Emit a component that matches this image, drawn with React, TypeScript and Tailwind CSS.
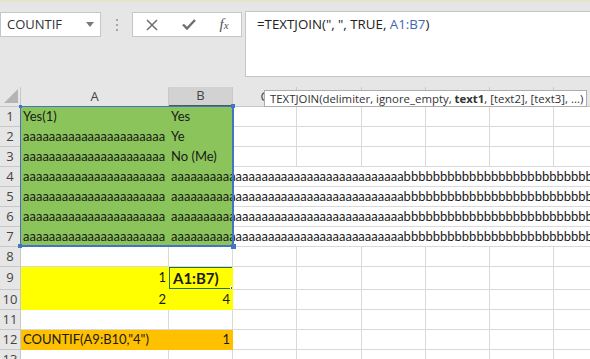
import React from "react";

type Cell = {
    text?: string;
    fill?: "green" | "yellow" | "orange";
    right?: boolean;
    bold?: boolean;
    overflow?: boolean;
    active?: boolean;
};

type Row = { n: number; h: string; cells: Cell[] };

const colW = [
    "w-[148px]",
    "w-[64px]",
    "w-[64px]",
    "w-[65px]",
    "w-[64px]",
    "w-[64px]",
    "w-[64px]",
    "w-[64px]",
];

const fillCls = {
    green: "bg-[#8bc45a] border-[#8bc45a]",
    yellow: "bg-[#ffff00] border-[#ffff00]",
    orange: "bg-[#ffc000] border-[#ffc000]",
};

const a22 = "a".repeat(22);
const longB = "a".repeat(36) + "b".repeat(30);

const rows: Row[] = [
    { n: 1, h: "h-[20px]", cells: [{ text: "Yes(1)", fill: "green" }, { text: "Yes", fill: "green" }] },
    { n: 2, h: "h-[20px]", cells: [{ text: a22, fill: "green" }, { text: "Ye", fill: "green" }] },
    { n: 3, h: "h-[20px]", cells: [{ text: a22, fill: "green" }, { text: "No (Me)", fill: "green" }] },
    { n: 4, h: "h-[20px]", cells: [{ text: a22, fill: "green" }, { text: longB, fill: "green", overflow: true }] },
    { n: 5, h: "h-[20px]", cells: [{ text: a22, fill: "green" }, { text: longB, fill: "green", overflow: true }] },
    { n: 6, h: "h-[20px]", cells: [{ text: a22, fill: "green" }, { text: longB, fill: "green", overflow: true }] },
    { n: 7, h: "h-[20px]", cells: [{ text: a22, fill: "green" }, { text: longB, fill: "green", overflow: true }] },
    { n: 8, h: "h-[20px]", cells: [] },
    { n: 9, h: "h-[23px]", cells: [{ text: "1", fill: "yellow", right: true }, { text: "A1:B7)", fill: "yellow", bold: true, active: true }] },
    { n: 10, h: "h-[20px]", cells: [{ text: "2", fill: "yellow", right: true }, { text: "4", fill: "yellow", right: true }] },
    { n: 11, h: "h-[20px]", cells: [] },
    { n: 12, h: "h-[20px]", cells: [{ text: 'COUNTIF(A9:B10,"4")', fill: "orange" }, { text: "1", fill: "orange", right: true }] },
    { n: 13, h: "h-[20px]", cells: [] },
];

const SheetRow = ({ row }: { row: Row }) => {
    const hasOverflow = row.cells.some((c) => c.overflow);
    return (
        <div className={`flex ${row.h}`}>
            <div className="w-[21px] shrink-0 border-r border-b border-[#c8c8c8] bg-[#e6e6e6] flex items-center justify-center text-[13px] text-[#444] font-['Open_Sans']">
                {row.n}
            </div>
            {colW.map((w, i) => {
                if (hasOverflow && i >= 2) return null;
                const c = row.cells[i] || {};
                return (
                    <div
                        key={i}
                        className={`${w} shrink-0 relative flex items-center border-r border-b px-[2px] whitespace-nowrap ${
                            c.fill ? fillCls[c.fill] : "border-[#d9d9d9]"
                        } ${c.right ? "justify-end" : ""} ${c.overflow ? "overflow-visible z-10" : "overflow-hidden"} ${
                            c.bold ? "font-bold text-[15px] pl-[4px]" : "text-[13px]"
                        }`}
                    >
                        {c.text}
                        {c.active && (
                            <div className="absolute -left-[1px] -top-[1px] w-[66px] h-[24px] border-2 border-[#217346]">
                                <div className="absolute -right-[3px] -bottom-[3px] w-[5px] h-[5px] bg-[#217346] border border-white" />
                            </div>
                        )}
                    </div>
                );
            })}
            {hasOverflow && <div className="flex-1 border-b border-[#d9d9d9]" />}
        </div>
    );
};

export default function App() {
    return (
        <div className="w-[590px] h-[359px] overflow-hidden bg-[#e6e6e6] relative font-['Lato'] text-[#1a1a1a]">
            <div className="h-[2px] bg-[#e6e4c9]" />

            {/* formula bar */}
            <div className="flex items-start h-[85px] pt-[9px]">
                <div className="mt-[1px] w-[101px] h-[25px] bg-white border border-[#c6c6c6] flex items-center pl-[6px] pr-[6px] font-['Open_Sans'] text-[13px] text-[#333]">
                    <span className="flex-1">COUNTIF</span>
                    <svg width="8" height="5" viewBox="0 0 8 5">
                        <path d="M0 0 L8 0 L4 5 Z" fill="#7a7a7a" />
                    </svg>
                </div>
                <div className="w-[31px] h-[25px] mt-[1px] flex flex-col items-center justify-center gap-[3px]">
                    <div className="w-[2px] h-[2px] bg-[#a6a6a6]" />
                    <div className="w-[2px] h-[2px] bg-[#a6a6a6]" />
                    <div className="w-[2px] h-[2px] bg-[#a6a6a6]" />
                </div>
                <div className="mt-[1px] w-[110px] h-[25px] bg-white border border-[#c6c6c6] flex items-center">
                    <div className="w-[37px] flex justify-center">
                        <svg width="12" height="12" viewBox="0 0 12 12">
                            <path d="M1 1 L11 11 M11 1 L1 11" stroke="#6e6e6e" strokeWidth="1.5" />
                        </svg>
                    </div>
                    <div className="w-[37px] flex justify-center">
                        <svg width="14" height="11" viewBox="0 0 14 11">
                            <path d="M1 5.5 L5 9.5 L13 1" stroke="#6e6e6e" strokeWidth="2.4" fill="none" />
                        </svg>
                    </div>
                    <div className="w-[34px] flex justify-center font-['Liberation_Serif'] italic text-[#555] text-[15px] leading-none">
                        f<span className="text-[11px] mt-[3px]">x</span>
                    </div>
                </div>
                <div className="ml-[3px] flex-1 h-[66px] bg-white border border-[#c6c6c6] border-r-0 pl-[11px] pt-[3px] font-['Open_Sans'] text-[13.3px] text-[#222]">
                    =TEXTJOIN(", ", TRUE, <span className="text-[#3f68b3]">A1:B7</span>)
                </div>
            </div>

            {/* column headers */}
            <div className="flex h-[20px] font-['Open_Sans'] text-[13px] text-[#444]">
                <div className="w-[21px] shrink-0 border-r border-b border-[#c8c8c8] bg-[#e6e6e6] flex items-end justify-end pr-[2px] pb-[3px]">
                    <svg width="14" height="14" viewBox="0 0 14 14">
                        <path d="M14 0 L14 14 L0 14 Z" fill="#b4b4b4" />
                    </svg>
                </div>
                {["A", "B", "C", "", "", "", "", ""].map((l, i) => (
                    <div
                        key={i}
                        className={`${colW[i]} shrink-0 flex items-center justify-center border-r ${
                            l === "B"
                                ? "bg-[#d2d2d2] border-b-2 border-b-[#4a5e54] border-r-[#c8c8c8]"
                                : "bg-[#e6e6e6] border-b border-[#c8c8c8]"
                        }`}
                    >
                        {l}
                    </div>
                ))}
            </div>

            {/* sheet */}
            <div className="relative bg-white">
                {rows.map((r) => (
                    <SheetRow key={r.n} row={r} />
                ))}
                {/* range reference highlight A1:B7 */}
                <div className="absolute left-[20px] -top-[1px] w-[214px] h-[141px] border border-r-2 border-b-2 border-[#4472c4] z-20 pointer-events-none">
                    <div className="absolute -left-[2px] -top-[2px] w-[3px] h-[3px] bg-[#4472c4]" />
                    <div className="absolute -right-[3px] -top-[3px] w-[4px] h-[4px] bg-[#4472c4]" />
                    <div className="absolute -left-[3px] -bottom-[3px] w-[4px] h-[4px] bg-[#4472c4]" />
                    <div className="absolute -right-[4px] -bottom-[4px] w-[5px] h-[5px] bg-[#4472c4]" />
                </div>
            </div>

            {/* function tooltip */}
            <div className="absolute left-[264px] top-[90px] h-[17px] pl-[5px] pr-[3px] bg-white border border-[#adadad] flex items-center font-['Open_Sans'] text-[11.4px] text-[#333] whitespace-nowrap z-30">
                <span>
                    TEXTJOIN(delimiter, ignore_empty, <b className="font-bold">text1</b>, [text2], [text3], ...)
                </span>
            </div>
        </div>
    );
}
